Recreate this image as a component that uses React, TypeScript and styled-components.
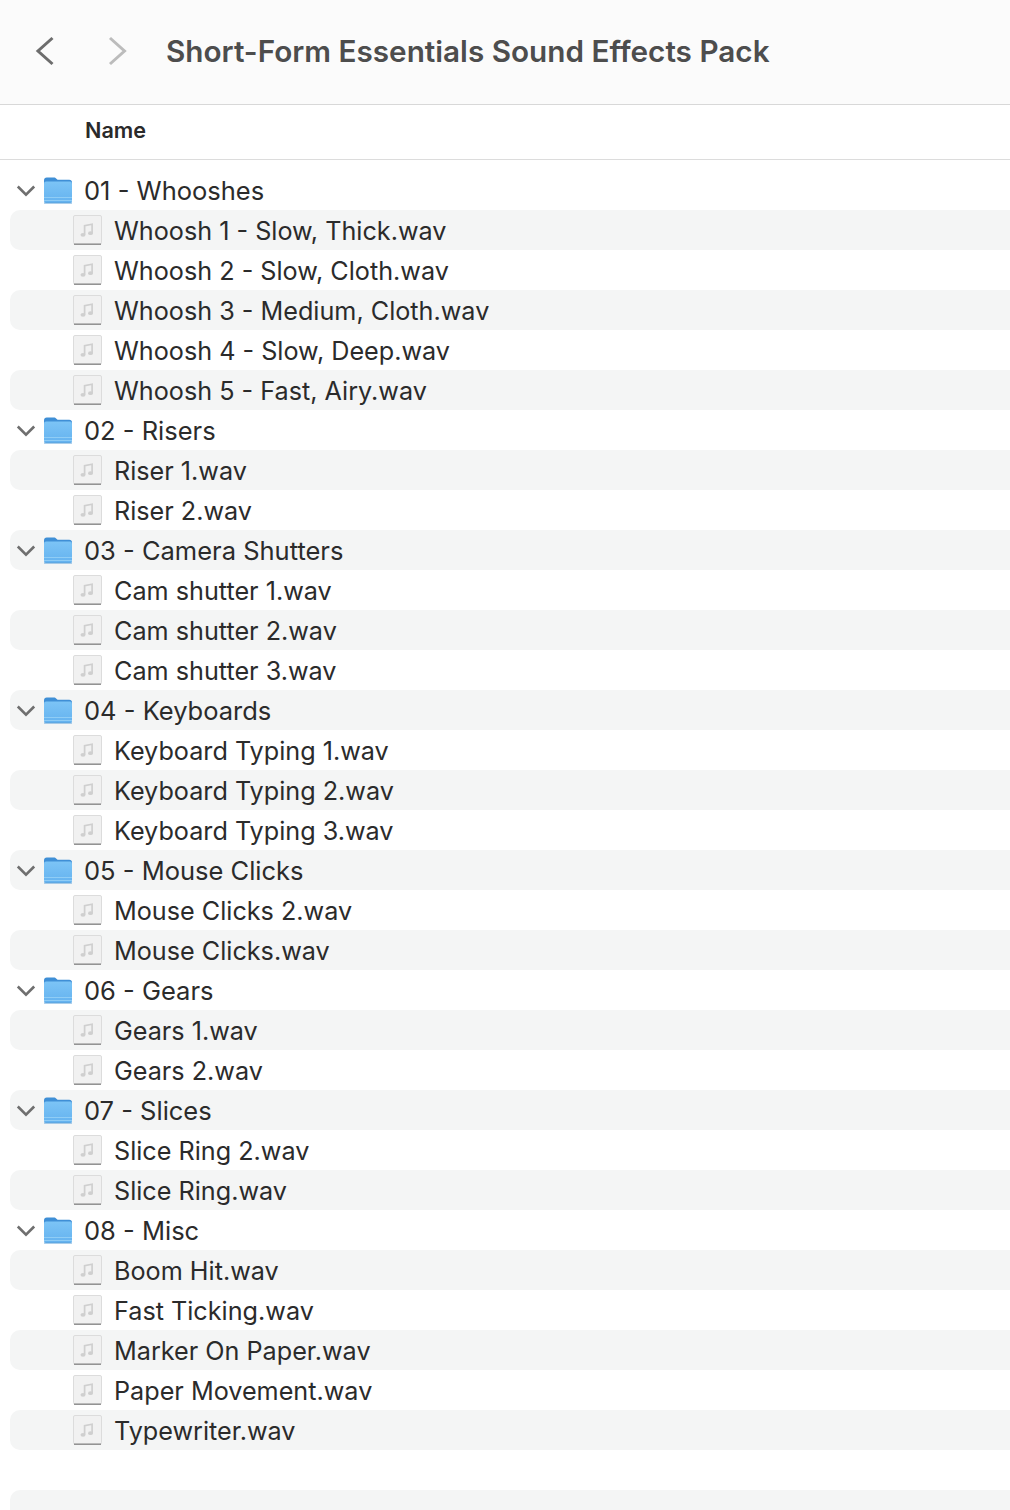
import { createGlobalStyle, styled } from "styled-components"

const GlobalStyle = createGlobalStyle`
  html, body {
    margin: 0;
    padding: 0;
    background: #fff;
    overflow: hidden;
  }
  body {
    font-family: Inter, "Liberation Sans", sans-serif;
    color: #262626;
  }
`

const Page = styled.div`
  width: 1010px;
  height: 1510px;
  overflow: hidden;
`

const Toolbar = styled.header`
  box-sizing: border-box;
  height: 105px;
  background: #fbfbfb;
  border-bottom: 1px solid #d8d8d8;
  display: flex;
  align-items: center;
  padding: 0 0 2px 34px;
`

const NavButton = styled.svg`
  width: 22px;
  height: 30px;
  flex: none;
  margin-right: 50px;
  &:last-of-type {
    margin-right: 38px;
  }
`

const Title = styled.h1`
  margin: 0;
  font-size: 29.7px;
  font-weight: 600;
  color: #4d4d4d;
  white-space: nowrap;
`

const ColumnHeader = styled.div`
  box-sizing: border-box;
  height: 55px;
  border-bottom: 1px solid #dcdcdc;
  display: flex;
  align-items: center;
  padding: 0 0 5px 85px;
  font-size: 21.6px;
  font-weight: 600;
  color: #2a2a2a;
`

const List = styled.div`
  padding: 10px 0 0 10px;
  display: flex;
  flex-direction: column;
`

const Row = styled.div<{ $striped: boolean; $folder: boolean }>`
  height: 40px;
  flex: none;
  display: flex;
  align-items: center;
  border-radius: 10px 0 0 10px;
  background: ${p => (p.$striped ? "#f4f5f5" : "transparent")};
  padding-left: ${p => (p.$folder ? "6px" : "62px")};
`

const Label = styled.span`
  font-size: 25.2px;
  font-weight: 400;
  line-height: 38px;
  padding-top: 2px;
  white-space: nowrap;
  color: #2b2b2b;
`

const FolderLabel = styled(Label)`
  font-size: 25.5px;
  margin-left: 11px;
`

const FileLabel = styled(Label)`
  margin-left: 11px;
`

const Chevron = styled.svg`
  width: 20px;
  height: 14px;
  flex: none;
  margin-right: 7px;
`

const FolderGlyph = styled.svg`
  width: 30px;
  height: 28px;
  flex: none;
`

const FileGlyph = styled.svg`
  width: 31px;
  height: 32px;
  flex: none;
`

function FolderIcon({ id }: { id: string }) {
  return (
    <FolderGlyph viewBox="0 0 30 28">
      <defs>
        <linearGradient id={id} x1="0" y1="0" x2="0" y2="1">
          <stop offset="0" stopColor="#7cc4f6" />
          <stop offset="1" stopColor="#64b2ef" />
        </linearGradient>
      </defs>
      <path d="M1 4.5C1 2.6 2 1.5 3.8 1.5h7c1.2 0 1.8.4 2.6 1.2l1.2 1.1h11.6c1.8 0 2.8 1 2.8 2.8V12H1z" fill="#3f8fd6" />
      <rect x="1" y="5.6" width="28" height="21.4" rx="2" fill={`url(#${id})`} />
      <rect x="1" y="21" width="28" height="1" fill="#8fcdf6" />
      <rect x="1" y="24" width="28" height="1" fill="#8fcdf6" />
      <rect x="1" y="26.4" width="28" height="1" rx=".5" fill="#5a9fd8" />
    </FolderGlyph>
  )
}

function FileIcon() {
  return (
    <FileGlyph viewBox="0 0 31 32">
      <rect x="1.5" y="1.5" width="28" height="28.6" rx="1.5" fill="#f1f1f1" stroke="#dcdcdc" />
      <path d="M2 30.2h27" stroke="#8a8a8a" strokeWidth="1.4" />
      <path d="M12.6 20.5V11.6l7.5-1.4v8.8" fill="none" stroke="#cfcfcf" strokeWidth="1.7" />
      <ellipse cx="11" cy="20.8" rx="2.5" ry="1.9" fill="#cfcfcf" />
      <ellipse cx="18.5" cy="19.2" rx="2.5" ry="1.9" fill="#cfcfcf" />
    </FileGlyph>
  )
}

const groups = [
  { name: "01 - Whooshes", files: ["Whoosh 1 - Slow, Thick.wav", "Whoosh 2 - Slow, Cloth.wav", "Whoosh 3 - Medium, Cloth.wav", "Whoosh 4 - Slow, Deep.wav", "Whoosh 5 - Fast, Airy.wav"] },
  { name: "02 - Risers", files: ["Riser 1.wav", "Riser 2.wav"] },
  { name: "03 - Camera Shutters", files: ["Cam shutter 1.wav", "Cam shutter 2.wav", "Cam shutter 3.wav"] },
  { name: "04 - Keyboards", files: ["Keyboard Typing 1.wav", "Keyboard Typing 2.wav", "Keyboard Typing 3.wav"] },
  { name: "05 - Mouse Clicks", files: ["Mouse Clicks 2.wav", "Mouse Clicks.wav"] },
  { name: "06 - Gears", files: ["Gears 1.wav", "Gears 2.wav"] },
  { name: "07 - Slices", files: ["Slice Ring 2.wav", "Slice Ring.wav"] },
  { name: "08 - Misc", files: ["Boom Hit.wav", "Fast Ticking.wav", "Marker On Paper.wav", "Paper Movement.wav", "Typewriter.wav"] },
]

const rows = groups.flatMap(g => [
  { label: g.name, folder: true },
  ...g.files.map(f => ({ label: f, folder: false })),
])

export default function App() {
  return (
    <Page>
      <GlobalStyle />
      <Toolbar>
        <NavButton viewBox="0 0 22 30">
          <path d="M18.5 2 4 15l14.5 13" fill="none" stroke="#6d6d6d" strokeWidth="3" />
        </NavButton>
        <NavButton viewBox="0 0 22 30">
          <path d="M4 2 18.5 15 4 28" fill="none" stroke="#bcbcbc" strokeWidth="3" />
        </NavButton>
        <Title>Short-Form Essentials Sound Effects Pack</Title>
      </Toolbar>
      <ColumnHeader>Name</ColumnHeader>
      <List>
        {rows.map((r, i) => (
          <Row key={r.label} $striped={i % 2 === 1} $folder={r.folder}>
            {r.folder ? (
              <>
                <Chevron viewBox="0 0 20 14">
                  <path d="M1.8 3.5 10 11.7l8.2-8.2" fill="none" stroke="#6f6f6f" strokeWidth="2.6" />
                </Chevron>
                <FolderIcon id={`folder-${i}`} />
                <FolderLabel>{r.label}</FolderLabel>
              </>
            ) : (
              <>
                <FileIcon />
                <FileLabel>{r.label}</FileLabel>
              </>
            )}
          </Row>
        ))}
        <Row $striped={false} $folder={false} />
        <Row $striped={true} $folder={false} />
      </List>
    </Page>
  )
}
